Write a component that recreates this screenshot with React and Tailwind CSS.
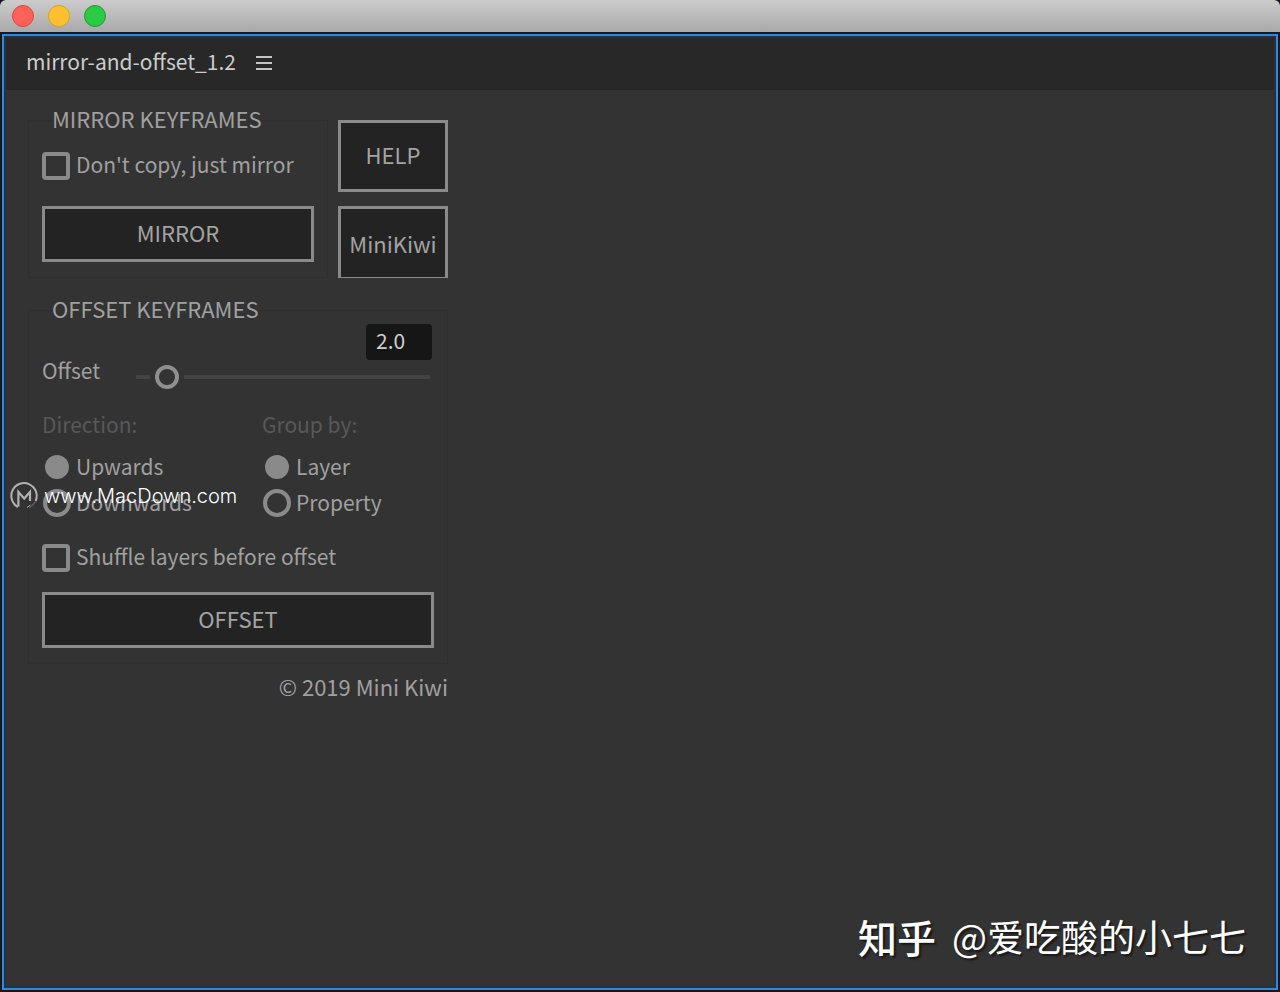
import { useState } from "react";

function TitleBar() {
  return (
    <header className="flex h-8 shrink-0 items-center gap-3.5 rounded-t-md bg-linear-to-b from-[#cccccc] to-[#a9a9a9] pl-3">
      <button type="button" aria-label="Close" className="size-[22px] rounded-full border border-[#e0453f] bg-[#ff6159]" />
      <button type="button" aria-label="Minimize" className="size-[22px] rounded-full border border-[#dfa023] bg-[#ffc02f]" />
      <button type="button" aria-label="Zoom" className="size-[22px] rounded-full border border-[#1f9a31] bg-[#2acb42]" />
    </header>
  );
}

function PanelButton({ children, className }) {
  return (
    <button
      type="button"
      className={`border-3 border-[#8a8a8a] bg-[#232323] text-center text-[22px] leading-5 text-[#a3a3a3] ${className}`}
    >
      {children}
    </button>
  );
}

function GroupBox({ title, className, children }) {
  return (
    <fieldset className={`border border-[#2f2f2f] px-[13px] pb-[15px] ${className}`}>
      <legend className="ml-2.5 pb-1 text-[22px] leading-5">{title}</legend>
      {children}
    </fieldset>
  );
}

function Checkbox({ label }) {
  return (
    <label className="flex h-7 items-center gap-1.5">
      <input
        type="checkbox"
        className="size-7 shrink-0 appearance-none rounded-sm border-4 border-[#8a8a8a] checked:bg-[#8a8a8a]"
      />
      <span className="pb-1 leading-5 whitespace-nowrap">{label}</span>
    </label>
  );
}

function RadioGroup({ title, name, options }) {
  const [selected, setSelected] = useState(options[0]);
  return (
    <div role="radiogroup" aria-label={title} className="flex flex-col">
      <p className="mb-[11px] pb-1 leading-5 text-[#585858]">{title}</p>
      {options.map((option) => (
        <label key={option} className="flex h-9 items-center gap-1">
          <span className="flex size-[30px] shrink-0 items-center justify-center">
            <input
              type="radio"
              name={name}
              checked={selected === option}
              onChange={() => setSelected(option)}
              className="size-7 appearance-none rounded-full border-4 border-[#8a8a8a] checked:size-6 checked:bg-[#8a8a8a]"
            />
          </span>
          <span className="pb-0.5 leading-5">{option}</span>
        </label>
      ))}
    </div>
  );
}

function OffsetSlider() {
  const [offset, setOffset] = useState("2.0");
  return (
    <div className="flex flex-col">
      <input
        type="text"
        aria-label="Offset value"
        value={offset}
        onChange={(e) => setOffset(e.target.value)}
        className="mr-0.5 h-9 w-[66px] self-end rounded-sm bg-[#161616] px-2.5 pb-1 leading-5 text-[#cfcfcf]"
      />
      <div className="flex justify-between pr-1">
        <label htmlFor="offset" className="pb-1 leading-5">
          Offset
        </label>
        <input
          id="offset"
          type="range"
          min="0"
          max="28"
          step="0.1"
          value={Number(offset) || 0}
          onChange={(e) => setOffset(Number(e.target.value).toFixed(1))}
          className="mt-[5px] h-6 w-[294px] appearance-none bg-transparent [&::-webkit-slider-runnable-track]:h-1 [&::-webkit-slider-runnable-track]:bg-[#444444] [&::-webkit-slider-thumb]:-mt-2.5 [&::-webkit-slider-thumb]:size-6 [&::-webkit-slider-thumb]:appearance-none [&::-webkit-slider-thumb]:rounded-full [&::-webkit-slider-thumb]:border-4 [&::-webkit-slider-thumb]:border-[#8f8f8f] [&::-webkit-slider-thumb]:bg-[#333333] [&::-webkit-slider-thumb]:shadow-[0_0_0_5px_#333333]"
        />
      </div>
    </div>
  );
}

function SiteWatermark() {
  return (
    <div className="pointer-events-none absolute top-[482px] left-[10px] flex items-center gap-1.5">
      <svg viewBox="0 0 28 28" className="size-7" fill="none" stroke="#b0b0b0">
        <path d="M8 25A12.7 12.7 0 1 1 25.6 19" strokeWidth="2" />
        <path d="M25.4 19.6A12.7 12.7 0 0 1 19.4 25.4" strokeWidth="1" stroke="#777777" />
        <path d="M8.4 24.6V10l5.8 6.6L20 10V19" strokeWidth="2.2" />
        <path d="M17 25.4l3.4-2.2" strokeWidth="1" />
      </svg>
      <span className="font-['Inter',sans-serif] text-[20px] leading-6 font-light text-white">www.MacDown.com</span>
    </div>
  );
}

function AuthorWatermark() {
  return (
    <div className="pointer-events-none absolute right-[34px] bottom-8 flex items-center gap-4 leading-[48px] whitespace-nowrap text-white [text-shadow:2px_2px_2px_rgba(0,0,0,0.55)]">
      <span className="text-[39px] font-medium">知乎</span>
      <span className="text-[37px]">@爱吃酸的小七七</span>
    </div>
  );
}

export default function App() {
  return (
    <div className="relative flex min-h-screen flex-col bg-[#101a26] font-['Noto_Sans_CJK_SC',sans-serif] text-[21px] text-[#a0a0a0]">
      <TitleBar />
      <main className="flex grow flex-col p-0.5">
        <div className="flex grow flex-col border-2 border-[#4484c3]">
          <div className="flex grow flex-col border-2 border-[#1c344f] bg-[#333333]">
            <div className="flex h-[52px] shrink-0 items-center gap-5 bg-[#282828] pb-0.5 pl-5">
              <h1 className="pb-1 leading-5 text-[#cccccc]">mirror-and-offset_1.2</h1>
              <button type="button" aria-label="Panel menu">
                <svg viewBox="0 0 16 14" className="h-3.5 w-4" stroke="#c4c4c4" strokeWidth="2">
                  <path d="M0 1h16M0 7h16M0 13h16" />
                </svg>
              </button>
            </div>
            <div className="flex w-[442px] flex-col pt-[18px] pl-[22px]">
              <div className="flex gap-2.5">
                <GroupBox title="MIRROR KEYFRAMES" className="w-[300px]">
                  <div className="flex flex-col gap-[26px] pt-5">
                    <Checkbox label="Don't copy, just mirror" />
                    <PanelButton className="h-14 w-full pb-1">MIRROR</PanelButton>
                  </div>
                </GroupBox>
                <div className="mt-3 flex grow flex-col gap-3.5">
                  <PanelButton className="h-[72px] pb-1">HELP</PanelButton>
                  <PanelButton className="h-[72px] border-b">MiniKiwi</PanelButton>
                </div>
              </div>
              <GroupBox title="OFFSET KEYFRAMES" className="mt-5">
                <div className="flex flex-col pt-0.5">
                  <OffsetSlider />
                  <div className="mt-[25px] grid grid-cols-[220px_1fr]">
                    <RadioGroup title="Direction:" name="direction" options={["Upwards", "Downwards"]} />
                    <RadioGroup title="Group by:" name="group" options={["Layer", "Property"]} />
                  </div>
                  <div className="mt-[23px] mb-5">
                    <Checkbox label="Shuffle layers before offset" />
                  </div>
                  <PanelButton className="h-14 w-full pb-1">OFFSET</PanelButton>
                </div>
              </GroupBox>
              <p className="mt-3 pb-1 text-right text-[22px] leading-5">© 2019 Mini Kiwi</p>
            </div>
          </div>
        </div>
      </main>
      <SiteWatermark />
      <AuthorWatermark />
    </div>
  );
}
